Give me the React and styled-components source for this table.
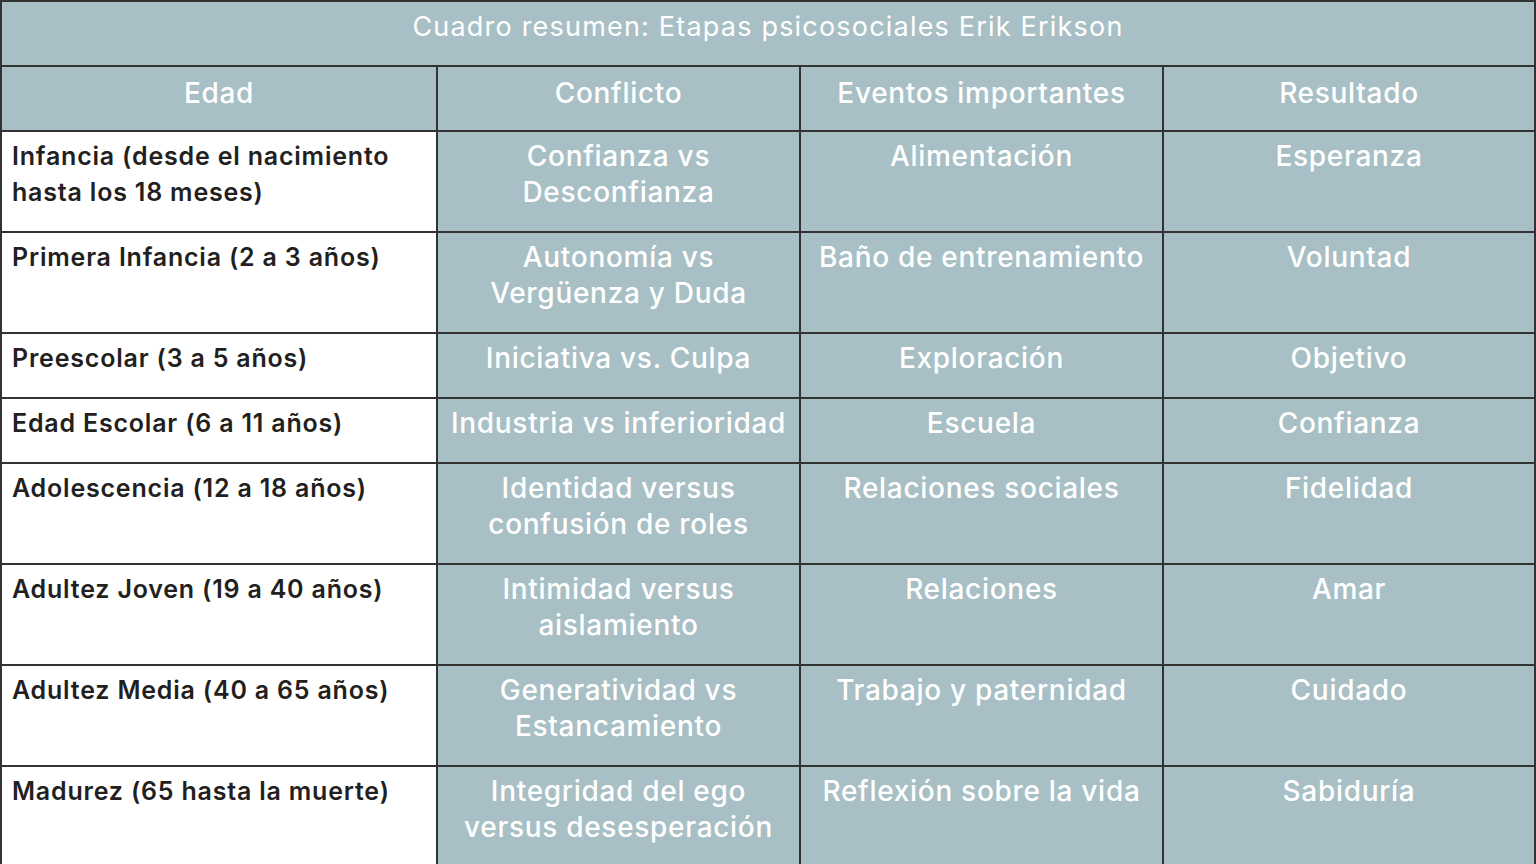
import styled, { createGlobalStyle } from "styled-components"

const GlobalStyle = createGlobalStyle`
  html, body {
    margin: 0;
    padding: 0;
    background: #a8bfc5;
  }
  body {
    font-family: "Inter", "Liberation Sans", sans-serif;
  }
`

const Table = styled.div`
  width: 1536px;
  height: 864px;
  box-sizing: border-box;
  overflow: hidden;
  display: grid;
  grid-template-columns: 436px 363px 363px 1fr;
  grid-template-rows: 65px 65px 101px 101px 65px 65px 101px 101px 101px 101px;
  background: #a8bfc5;
  border-top: 2px solid #333;
  border-left: 2px solid #333;
`

const Title = styled.div`
  grid-column: 1 / -1;
  display: flex;
  align-items: flex-start;
  justify-content: center;
  padding-top: 8px;
  box-sizing: border-box;
  color: #fff;
  font-size: 27px;
  letter-spacing: 1.2px;
  font-weight: 400;
  border-right: 2px solid #333;
  border-bottom: 2px solid #333;
`

const Cell = styled.div`
  box-sizing: border-box;
  border-right: 2px solid #333;
  border-bottom: 2px solid #333;
  padding: ${(p) => (p.$head ? "8px 10px 0" : "6px 10px 0")};
  background: ${(p) => (p.$age ? "#fff" : "transparent")};
  color: ${(p) => (p.$age ? "#231f20" : "#fff")};
  text-align: ${(p) => (p.$age ? "left" : "center")};
  font-size: ${(p) => (p.$age ? "25px" : "28px")};
  letter-spacing: ${(p) => (p.$age ? "0.8px" : "0.7px")};
  font-weight: ${(p) => (p.$age ? 600 : 500)};
  line-height: 36px;
`

const rows = [
  ["Infancia (desde el nacimiento hasta los 18 meses)", "Confianza vs Desconfianza", "Alimentación", "Esperanza"],
  ["Primera Infancia (2 a 3 años)", "Autonomía vs Vergüenza y Duda", "Baño de entrenamiento", "Voluntad"],
  ["Preescolar (3 a 5 años)", "Iniciativa vs. Culpa", "Exploración", "Objetivo"],
  ["Edad Escolar (6 a 11 años)", "Industria vs inferioridad", "Escuela", "Confianza"],
  ["Adolescencia (12 a 18 años)", "Identidad versus confusión de roles", "Relaciones sociales", "Fidelidad"],
  ["Adultez Joven (19 a 40 años)", "Intimidad versus aislamiento", "Relaciones", "Amar"],
  ["Adultez Media (40 a 65 años)", "Generatividad vs Estancamiento", "Trabajo y paternidad", "Cuidado"],
  ["Madurez (65 hasta la muerte)", "Integridad del ego versus desesperación", "Reflexión sobre la vida", "Sabiduría"],
]

const heads = ["Edad", "Conflicto", "Eventos importantes", "Resultado"]

export default function App() {
  return (
    <>
      <GlobalStyle />
      <Table>
        <Title>Cuadro resumen: Etapas psicosociales Erik Erikson</Title>
        {heads.map((h) => (
          <Cell $head key={h}>{h}</Cell>
        ))}
        {rows.map((r) =>
          r.map((c, i) => (
            <Cell $age={i === 0} key={r[0] + i}>{c}</Cell>
          ))
        )}
      </Table>
    </>
  )
}
